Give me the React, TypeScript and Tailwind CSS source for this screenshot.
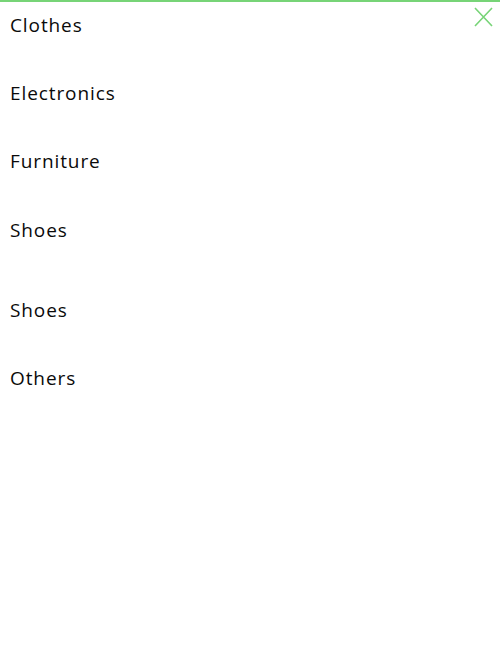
const items = [
  { label: "Clothes", gap: "mb-[44px]" },
  { label: "Electronics", gap: "mb-[44px]" },
  { label: "Furniture", gap: "mb-[45px]" },
  { label: "Shoes", gap: "mb-[56px]" },
  { label: "Shoes", gap: "mb-[44px]" },
  { label: "Others", gap: "mb-[44px]" },
];

export default function App() {
  return (
    <div className="relative min-h-[663px] w-full bg-white border-t-2 border-[#77d477] font-['Open_Sans',sans-serif]">
      <button className="absolute right-[7px] top-[5px] text-[#77d477]" aria-label="Close">
        <svg width="19" height="20" viewBox="0 0 19 20" fill="none" stroke="currentColor" strokeWidth="1.6">
          <path d="M1 1L18 19M18 1L1 19" />
        </svg>
      </button>
      <ul className="pt-[11px] pl-[10px]">
        {items.map((it, i) => (
          <li key={i} className={`text-[19px] leading-[24px] tracking-[0.9px] text-[#0a0a0a] ${it.gap}`}>
            {it.label}
          </li>
        ))}
      </ul>
    </div>
  );
}
